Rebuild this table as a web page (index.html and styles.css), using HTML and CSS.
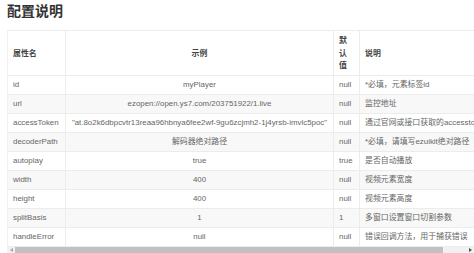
FILE: index.html
```html
<!DOCTYPE html>
<html lang="zh">
<head>
<meta charset="utf-8">
<link rel="stylesheet" href="styles.css">
</head>
<body>
<div class="page">
  <h2 class="title">配置说明</h2>
  <div class="scroll">
    <table class="cfg">
      <colgroup>
        <col class="c-name"><col class="c-example"><col class="c-default"><col class="c-desc">
      </colgroup>
      <thead>
        <tr><th>属性名</th><th class="center">示例</th><th>默认值</th><th>说明</th></tr>
      </thead>
      <tbody>
        <tr><td>id</td><td class="center">myPlayer</td><td>null</td><td>*必填，元素标签id</td></tr>
        <tr><td>url</td><td class="center">ezopen://open.ys7.com/203751922/1.live</td><td>null</td><td>监控地址</td></tr>
        <tr><td>accessToken</td><td class="center">"at.8o2k6dbpcvtr13reaa96hbnya6fee2wf-9gu6zcjmh2-1j4yrsb-imvlc5poc"</td><td>null</td><td>通过官网或接口获取的accesstoken</td></tr>
        <tr><td>decoderPath</td><td class="center">解码器绝对路径</td><td>null</td><td>*必填，请填写ezuikit绝对路径</td></tr>
        <tr><td>autoplay</td><td class="center">true</td><td>true</td><td>是否自动播放</td></tr>
        <tr><td>width</td><td class="center">400</td><td>null</td><td>视频元素宽度</td></tr>
        <tr><td>height</td><td class="center">400</td><td>null</td><td>视频元素高度</td></tr>
        <tr><td>splitBasis</td><td class="center">1</td><td>1</td><td>多窗口设置窗口切割参数</td></tr>
        <tr><td>handleError</td><td class="center">null</td><td>null</td><td>错误回调方法，用于捕获错误</td></tr>
      </tbody>
    </table>
  </div>
  <div class="hscroll">
    <span class="arrow arrow-left"></span>
    <span class="track"><span class="thumb"></span></span>
    <span class="arrow arrow-right"></span>
  </div>
</div>
</body>
</html>
```

FILE: styles.css
```css
html, body {
  margin: 0;
  padding: 0;
  background: #fff;
}
body {
  font-family: "Liberation Sans", Arial, "Noto Sans CJK SC", sans-serif;
  color: #666;
  overflow: hidden;
}
.page {
  padding-left: 7px;
}
.title {
  margin: 0;
  padding-top: 1px;
  height: 29px;
  font-size: 14px;
  line-height: 18px;
  font-weight: bold;
  color: #333;
  font-family: "Noto Sans CJK SC", sans-serif;
}
.scroll {
  width: 467px;
  overflow: hidden;
}
.cfg {
  width: 492px;
  table-layout: fixed;
  border-collapse: collapse;
  font-size: 7.9px;
}
.c-name { width: 58px; }
.c-example { width: 268px; }
.c-default { width: 26px; }
.c-desc { width: 140px; }
.cfg th, .cfg td {
  border: 1px solid #ececec;
  padding: 3px 5px;
  text-align: left;
  vertical-align: middle;
}
.cfg th {
  font-weight: bold;
  color: #444;
  line-height: 12.5px;
  font-family: "Noto Sans CJK SC", sans-serif;
}
.cfg td {
  line-height: 12px;
  white-space: nowrap;
  overflow: hidden;
}
.cfg th:first-child, .cfg td:first-child {
  border-left-color: #f2f2f2;
}
.cfg .center {
  text-align: center;
}
.cfg tbody tr:nth-child(even) td {
  background: #f8f8f8;
}
.hscroll {
  display: flex;
  width: 467px;
  height: 7px;
  background: #f1f1f1;
}
.arrow {
  width: 8px;
  flex: none;
  display: flex;
  align-items: center;
  justify-content: center;
}
.arrow::before {
  content: "";
  width: 0;
  height: 0;
  border-top: 2px solid transparent;
  border-bottom: 2px solid transparent;
}
.arrow-left::before {
  border-right: 3px solid #a3a3a3;
}
.arrow-right::before {
  border-left: 3px solid #505050;
}
.track {
  flex: 1;
  display: flex;
}
.thumb {
  width: 428px;
  height: 7px;
  background: #c1c1c1;
}
```
